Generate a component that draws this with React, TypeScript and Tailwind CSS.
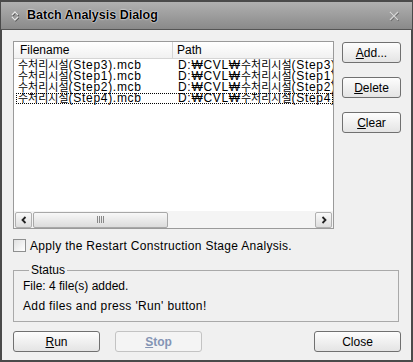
import React from "react";

const font = { fontFamily: '"Liberation Sans", "Noto Sans CJK KR", sans-serif' };

function Btn({ children, w, disabled }: { children: React.ReactNode; w: string; disabled?: boolean }) {
  return (
    <div
      className={
        "h-[21px] flex items-center justify-center rounded-[3px] border text-[12px] " +
        w +
        (disabled
          ? " border-[#c3c3c3] bg-[#f4f4f4] text-[#8494b4] font-bold"
          : " border-[#707070] bg-linear-to-b from-[#fdfdfd] to-[#e4e4e4] text-black")
      }
    >
      {children}
    </div>
  );
}

const steps = ["Step3", "Step1", "Step2", "Step4"];

function Name({ step }: { step: string }) {
  return (
    <>
      <span className="text-[11px]">수처리시설</span>
      <span className="tracking-[0.7px]">({step}).mcb</span>
    </>
  );
}

export default function App() {
  return (
    <div className="w-[413px] h-[362px] bg-[#4a4a4a] flex flex-col" style={font}>
      {/* title bar */}
      <div className="h-[28px] mt-[2px] mx-[1px] bg-linear-to-b from-[#b0b0b0] to-[#8a8a8a] border-b border-[#555] flex items-center px-[8px]">
        <svg width="12" height="14" viewBox="0 0 12 14" className="mr-[6px]">
          <path d="M3 6 L6 3 L9 6" fill="none" stroke="#555" strokeWidth="1.6" transform="translate(0.7,0.7)" />
          <path d="M3 8 L6 11 L9 8" fill="none" stroke="#555" strokeWidth="1.6" transform="translate(0.7,0.7)" />
          <path d="M3 6 L6 3 L9 6" fill="none" stroke="#e6e6e6" strokeWidth="1.4" />
          <path d="M3 8 L6 11 L9 8" fill="none" stroke="#e6e6e6" strokeWidth="1.4" />
        </svg>
        <span className="text-[12.5px] font-bold text-black [text-shadow:0_0_2px_#ffffff,0_0_1px_#ffffff]">
          Batch Analysis Dialog
        </span>
        <svg width="12" height="12" viewBox="0 0 12 12" className="ml-auto mr-[4px]">
          <path d="M2 2 L10 10 M10 2 L2 10" stroke="#6a6a6a" strokeWidth="1.6" transform="translate(0.6,0.8)" />
          <path d="M2 2 L10 10 M10 2 L2 10" stroke="#d4d4d4" strokeWidth="1.3" />
        </svg>
      </div>
      {/* body */}
      <div className="flex-1 bg-[#f0f0f0] mx-[2px] mb-[2px] pl-[11px] pr-[10px] pt-[11px] flex flex-col">
        <div className="flex">
          {/* list */}
          <div className="w-[321px] h-[188px] border border-[#9a9a9a] bg-white flex flex-col overflow-hidden">
            <div className="h-[17px] flex shrink-0 bg-linear-to-b from-white to-[#f1f1f1] border-b border-[#d5d5d5] text-[12px] leading-[16px]">
              <div className="w-[159px] pl-[6px] border-r border-[#d5d5d5]">Filename</div>
              <div className="pl-[4px]">Path</div>
            </div>
            <div className="flex-1 pt-[1px] relative">
              {steps.map((s, i) => (
                <div
                  key={i}
                  className={
                    "h-[11px] leading-[11px] flex whitespace-nowrap text-[12px] " +
                    (i === 3 ? "outline outline-1 outline-dotted outline-black -outline-offset-1 ml-[2px]" : "")
                  }
                >
                  <div className={"shrink-0 " + (i === 3 ? "w-[157px] pl-[2px]" : "w-[159px] pl-[4px]")}>
                    <Name step={s} />
                  </div>
                  <div className="pl-[5px]">
                    <span className="tracking-[0.7px]">D:₩CVL₩</span>
                    <Name step={s} />
                  </div>
                </div>
              ))}
            </div>
            {/* h scrollbar */}
            <div className="h-[17px] shrink-0 bg-[#f4f4f4] flex items-center px-[1px] gap-[1px]">
              <div className="w-[17px] h-[16px] border border-[#b0b0b0] rounded-[2px] bg-linear-to-b from-[#fafafa] to-[#dedede] flex items-center justify-center">
                <svg width="8" height="8" viewBox="0 0 8 8"><path d="M5.5 1 L2.5 4 L5.5 7" fill="none" stroke="#222" strokeWidth="1.8" /></svg>
              </div>
              <div className="w-[135px] h-[16px] border border-[#a8a8a8] rounded-[2px] bg-linear-to-b from-[#f8f8f8] to-[#dcdcdc] flex items-center justify-center">
                <div className="flex gap-[1px]">
                  <div className="w-[1px] h-[7px] bg-[#888]" />
                  <div className="w-[1px] h-[7px] bg-[#888]" />
                  <div className="w-[1px] h-[7px] bg-[#888]" />
                  <div className="w-[1px] h-[7px] bg-[#888]" />
                </div>
              </div>
              <div className="flex-1" />
              <div className="w-[17px] h-[16px] border border-[#b0b0b0] rounded-[2px] bg-linear-to-b from-[#fafafa] to-[#dedede] flex items-center justify-center">
                <svg width="8" height="8" viewBox="0 0 8 8"><path d="M2.5 1 L5.5 4 L2.5 7" fill="none" stroke="#222" strokeWidth="1.8" /></svg>
              </div>
            </div>
          </div>
          {/* right buttons */}
          <div className="ml-[8px] pt-[1px] flex flex-col gap-[14px]">
            <Btn w="w-[59px]"><span><u>A</u>dd...</span></Btn>
            <Btn w="w-[59px]"><span><u>D</u>elete</span></Btn>
            <Btn w="w-[59px]"><span><u>C</u>lear</span></Btn>
          </div>
        </div>
        {/* checkbox */}
        <div className="mt-[10px] flex items-center h-[13px]">
          <div className="w-[13px] h-[13px] border border-[#8e8f8f] bg-linear-to-br from-[#e0e0e0] to-white" />
          <span className="ml-[4px] text-[12px] tracking-[0.3px]">Apply the Restart Construction Stage Analysis.</span>
        </div>
        {/* status */}
        <fieldset className="mt-[12px] w-[386px] h-[58px] border border-[#a9a9a9] pl-[9px]">
          <legend className="ml-[6px] px-[2px] text-[12px] leading-[12px]">Status</legend>
          <div className="text-[12px] leading-[14px] mt-[3px]">File: 4 file(s) added.</div>
          <div className="text-[12px] leading-[14px] mt-[6px] tracking-[0.35px]">Add files and press 'Run' button!</div>
        </fieldset>
        {/* bottom buttons */}
        <div className="mt-[9px] flex">
          <Btn w="w-[87px]"><span><u>R</u>un</span></Btn>
          <div className="ml-[15px]">
            <Btn w="w-[87px]" disabled><span><u>S</u>top</span></Btn>
          </div>
          <div className="ml-auto">
            <Btn w="w-[87px]"><span>Close</span></Btn>
          </div>
        </div>
      </div>
    </div>
  );
}
